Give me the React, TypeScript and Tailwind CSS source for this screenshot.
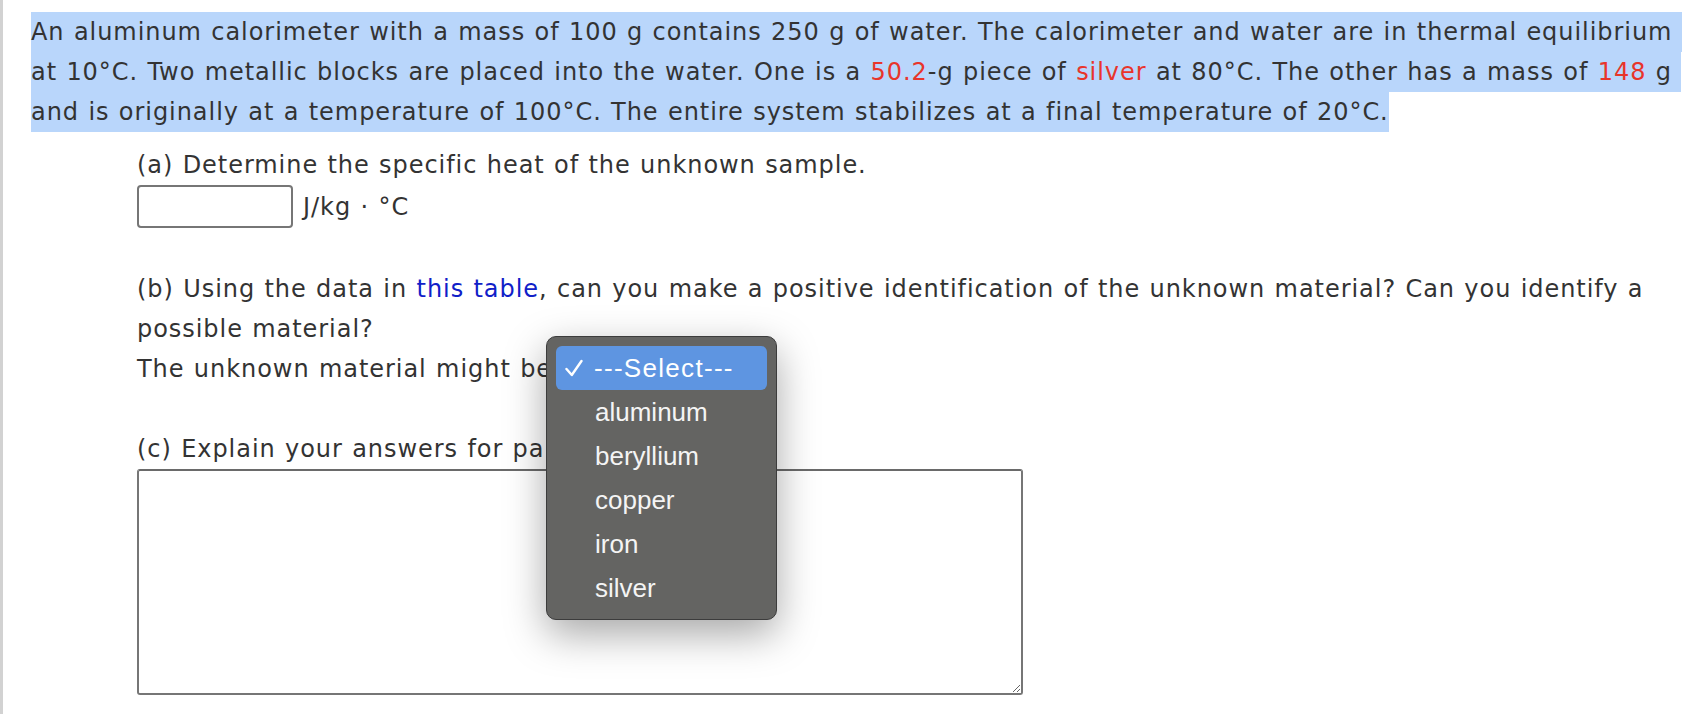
import React from "react";

const red = "text-[#e8352b]";

const options = ["aluminum", "beryllium", "copper", "iron", "silver"];

const Part = ({ children, className = "" }: { children: React.ReactNode; className?: string }) => (
  <div className={`ml-[106px] leading-[40px] ${className}`}>{children}</div>
);

export default function App() {
  return (
    <div
      className="relative min-h-[714px] border-l-[3px] border-[#d2d2d2] bg-white text-[#333333]"
      style={{ fontFamily: '"DejaVu Sans", Verdana, sans-serif' }}
    >
      <div className="pl-[28px] pt-[12px] text-[24px] tracking-[0.95px] [word-spacing:0.8px]">
        {/* problem statement, shown as selected */}
        <p className="whitespace-nowrap leading-[40px]">
          <span className="bg-[#b9d6fb] py-[6px] [box-decoration-break:clone]">
            An aluminum calorimeter with a mass of 100 g contains 250 g of water. The calorimeter and water are in thermal equilibrium&nbsp;
            <br />
            at 10°C. Two metallic blocks are placed into the water. One is a <span className={red}>50.2</span>-g piece of{" "}
            <span className={red}>silver</span> at 80°C. The other has a mass of <span className={red}>148</span> g&nbsp;
            <br />
            and is originally at a temperature of 100°C. The entire system stabilizes at a final temperature of 20°C.
          </span>
        </p>

        <Part className="mt-[13px]">(a) Determine the specific heat of the unknown sample.</Part>
        <Part className="flex items-center gap-[10px]">
          <input className="h-[43px] w-[156px] rounded-[4px] border-2 border-[#767676] bg-white px-2 outline-none" />
          <span>J/kg · °C</span>
        </Part>

        <Part className="mt-[41px]">
          (b) Using the data in <a className="text-[#1020c8]">this table</a>, can you make a positive identification of the
          unknown material? Can you identify a
          <br />
          possible material?
          <br />
          The unknown material might be{" "}
          <select className="h-[34px] w-[200px] rounded border border-[#767676] align-middle text-[20px]">
            <option>---Select---</option>
          </select>
        </Part>

        <Part className="mt-[40px]">(c) Explain your answers for parts (a) and (b).</Part>
        <div className="ml-[106px]">
          <textarea className="block h-[226px] w-[886px] resize rounded-[3px] border-2 border-[#767676] border-t-[#6a6a6a] outline-none" />
        </div>
      </div>

      {/* open select menu */}
      <div
        className="absolute left-[543px] top-[336px] w-[231px] rounded-[10px] border border-[#3c3c3c] bg-[#646462] px-[9px] py-[9px] text-[26px] text-[#f4f4f4] shadow-[0_14px_40px_rgba(0,0,0,0.35)]"
        style={{ fontFamily: '"Liberation Sans", Arial, sans-serif' }}
      >
        <div className="flex h-[44px] items-center rounded-[6px] bg-[#5e95e1] text-white">
          <svg width="18" height="20" viewBox="0 0 18 20" className="ml-[9px] mr-[11px]">
            <path d="M1.5 11 L6.8 17 L16.5 3" fill="none" stroke="white" strokeWidth="2.4" strokeLinecap="round" strokeLinejoin="round" />
          </svg>
          <span className="tracking-[1.3px]">---Select---</span>
        </div>
        {options.map((o) => (
          <div key={o} className="flex h-[44px] items-center pl-[39px]">
            {o}
          </div>
        ))}
      </div>
    </div>
  );
}
